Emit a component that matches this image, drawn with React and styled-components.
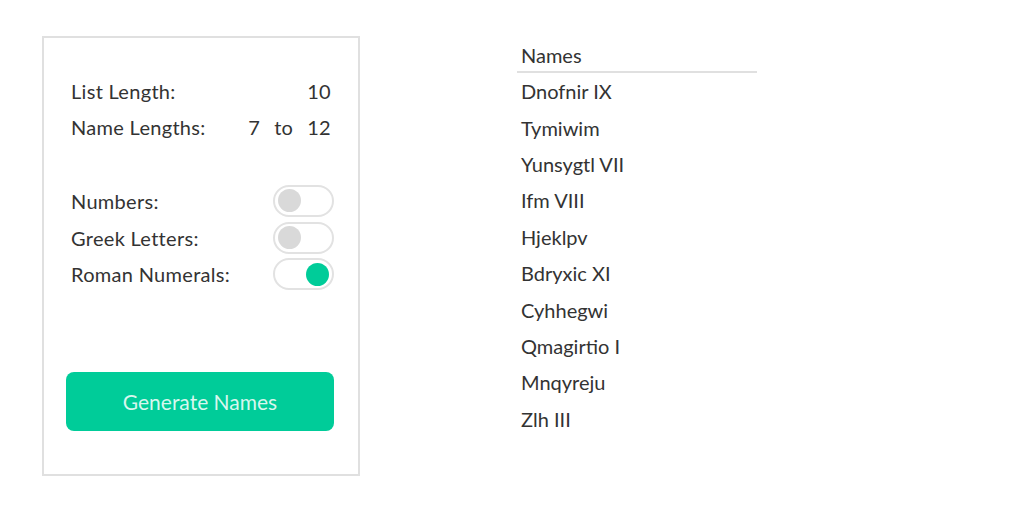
import React from "react";
import styled, { createGlobalStyle } from "styled-components";

const Global = createGlobalStyle`
  html, body { margin: 0; padding: 0; background: #fff; }
  body { font-family: Lato, "Noto Sans", sans-serif; color: #333; }
`;

const Page = styled.div`
  display: flex;
  align-items: flex-start;
  padding: 36px 0 0 42px;
  gap: 158px;
  width: 1024px;
  height: 512px;
  box-sizing: border-box;
`;

const Panel = styled.div`
  width: 318px;
  height: 440px;
  box-sizing: border-box;
  border: 2px solid #e0e0e0;
  padding: 35px 27px 43px 27px;
  display: flex;
  flex-direction: column;
`;

const Row = styled.div`
  display: flex;
  align-items: center;
  justify-content: space-between;
  height: ${(p) => p.$h || 36}px;
  font-size: 20px;
  letter-spacing: 0.3px;
`;

const Range = styled.div`
  display: flex;
  gap: 14px;
`;

const Spacer = styled.div`
  height: ${(p) => p.$h}px;
  flex: none;
`;

const Toggle = styled.div`
  width: 61px;
  height: 32px;
  box-sizing: border-box;
  border: 2px solid #e2e2e2;
  border-radius: 16px;
  display: flex;
  align-items: center;
  justify-content: ${(p) => (p.$on ? "flex-end" : "flex-start")};
  padding: 0 3px;
  margin-right: -3px;
`;

const Knob = styled.div`
  width: 23px;
  height: 23px;
  border-radius: 50%;
  background: ${(p) => (p.$on ? "#00cc99" : "#d9d9d9")};
`;

const Button = styled.button`
  margin-top: auto;
  margin-left: -5px;
  margin-right: -3px;
  height: 59px;
  border: none;
  border-radius: 8px;
  background: #00cc99;
  color: rgba(255, 255, 255, 0.85);
  font-family: Lato, "Noto Sans", sans-serif;
  font-size: 21px;
  cursor: pointer;
`;

const List = styled.div`
  width: 240px;
  margin-left: -1px;
  padding-top: 3px;
  display: flex;
  flex-direction: column;
`;

const Header = styled.div`
  height: 32px;
  padding-left: 4px;
  border-bottom: 2px solid #e0e0e0;
  font-size: 20px;
  display: flex;
  align-items: center;
`;

const Item = styled.div`
  height: 36.4px;
  padding-left: 4px;
  font-size: 20px;
  display: flex;
  align-items: center;
`;

const names = [
  "Dnofnir IX",
  "Tymiwim",
  "Yunsygtl VII",
  "Ifm VIII",
  "Hjeklpv",
  "Bdryxic XI",
  "Cyhhegwi",
  "Qmagirtio I",
  "Mnqyreju",
  "Zlh III",
];

export default function App() {
  return (
    <>
      <Global />
      <Page>
        <Panel>
          <Row>
            <span>List Length:</span>
            <span>10</span>
          </Row>
          <Row>
            <span>Name Lengths:</span>
            <Range>
              <span>7</span>
              <span>to</span>
              <span>12</span>
            </Range>
          </Row>
          <Spacer $h={37} />
          <Row $h={37}>
            <span>Numbers:</span>
            <Toggle>
              <Knob />
            </Toggle>
          </Row>
          <Row $h={37}>
            <span>Greek Letters:</span>
            <Toggle>
              <Knob />
            </Toggle>
          </Row>
          <Row $h={36}>
            <span>Roman Numerals:</span>
            <Toggle $on>
              <Knob $on />
            </Toggle>
          </Row>
          <Button>Generate Names</Button>
        </Panel>
        <List>
          <Header>Names</Header>
          {names.map((n) => (
            <Item key={n}>{n}</Item>
          ))}
        </List>
      </Page>
    </>
  );
}
